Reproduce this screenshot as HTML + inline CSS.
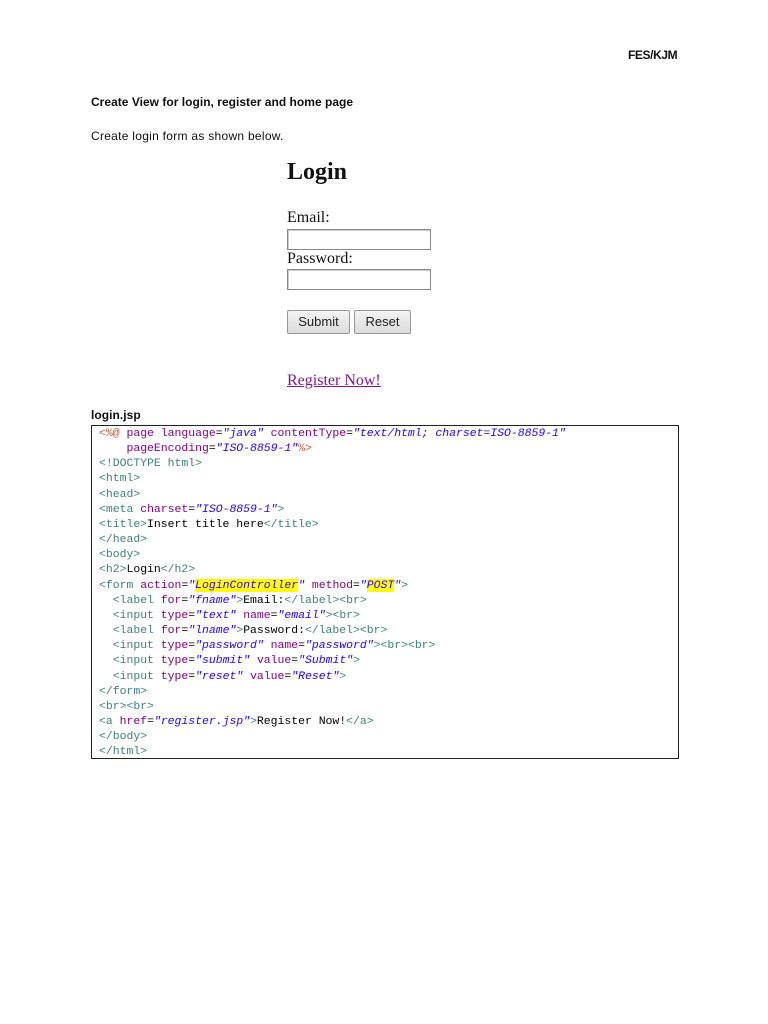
<!DOCTYPE html>
<html><head><meta charset="utf-8"><style>
body{margin:0;background:#fff;width:768px;height:1024px;position:relative;overflow:hidden}
.a{position:absolute;white-space:nowrap}
.cal{font-family:"Liberation Sans",sans-serif;font-weight:bold;font-size:12px;letter-spacing:0.05px;color:#111}
.ser{font-family:"Liberation Serif",serif;color:#111}
.inp{position:absolute;border:1px solid #888;background:#fff;box-shadow:inset 1px 1px 0 #ccc}
.btn{position:absolute;border:1px solid #999;background:linear-gradient(#f4f4f4,#dcdcdc);font-family:"Liberation Sans",sans-serif;font-size:13px;color:#222;text-align:center;line-height:22px;box-sizing:border-box;border-radius:2px}
.code{position:absolute;left:91px;top:425px;width:586px;height:332px;border:1px solid #222}
pre{margin:0;position:absolute;left:7px;top:0px;font-family:"Liberation Mono",monospace;font-size:11.45px;line-height:15.15px;color:#000}
.t{color:#3f7f7f}.n{color:#7f007f}.v{color:#2a00ff;font-style:italic}.d{color:#bf5f3f}.h{background:#ffff00}
</style></head><body>
<div class="a cal" style="left:628px;top:48px;letter-spacing:-0.4px">FES/KJM</div>
<div class="a cal" style="left:91px;top:95px;letter-spacing:0.02px">Create View for login, register and home page</div>
<div class="a cal" style="left:91px;top:129px;font-weight:normal;letter-spacing:0.28px">Create login form as shown below.</div>
<div class="a ser" style="left:287px;top:159px;font-size:24px;font-weight:bold">Login</div>
<div class="a ser" style="left:287px;top:209px;font-size:16px">Email:</div>
<div class="inp" style="left:287px;top:229px;width:142px;height:19px"></div>
<div class="a ser" style="left:287px;top:250px;font-size:16px">Password:</div>
<div class="inp" style="left:287px;top:269px;width:142px;height:19px"></div>
<div class="btn" style="left:287px;top:310px;width:63px;height:24px">Submit</div>
<div class="btn" style="left:354px;top:310px;width:57px;height:24px">Reset</div>
<div class="a ser" style="left:287px;top:372px;font-size:16px;color:#7a1a8a;text-decoration:underline">Register Now!</div>
<div class="a cal" style="left:91px;top:408px">login.jsp</div>
<div class="code"><pre><span class="d">&lt;%@</span> <span class="n">page language</span>=<span class="v">"java"</span> <span class="n">contentType</span>=<span class="v">"text/html; charset=ISO-8859-1"</span>
    <span class="n">pageEncoding</span>=<span class="v">"ISO-8859-1"</span><span class="d">%&gt;</span>
<span class="t">&lt;!DOCTYPE html&gt;</span>
<span class="t">&lt;html&gt;</span>
<span class="t">&lt;head&gt;</span>
<span class="t">&lt;meta</span> <span class="n">charset</span>=<span class="v">"ISO-8859-1"</span><span class="t">&gt;</span>
<span class="t">&lt;title&gt;</span>Insert title here<span class="t">&lt;/title&gt;</span>
<span class="t">&lt;/head&gt;</span>
<span class="t">&lt;body&gt;</span>
<span class="t">&lt;h2&gt;</span>Login<span class="t">&lt;/h2&gt;</span>
<span class="t">&lt;form</span> <span class="n">action</span>=<span class="v">"<span class="h">LoginController</span>"</span> <span class="n">method</span>=<span class="v">"<span class="h">POST</span>"</span><span class="t">&gt;</span>
  <span class="t">&lt;label</span> <span class="n">for</span>=<span class="v">"fname"</span><span class="t">&gt;</span>Email:<span class="t">&lt;/label&gt;&lt;br&gt;</span>
  <span class="t">&lt;input</span> <span class="n">type</span>=<span class="v">"text"</span> <span class="n">name</span>=<span class="v">"email"</span><span class="t">&gt;&lt;br&gt;</span>
  <span class="t">&lt;label</span> <span class="n">for</span>=<span class="v">"lname"</span><span class="t">&gt;</span>Password:<span class="t">&lt;/label&gt;&lt;br&gt;</span>
  <span class="t">&lt;input</span> <span class="n">type</span>=<span class="v">"password"</span> <span class="n">name</span>=<span class="v">"password"</span><span class="t">&gt;&lt;br&gt;&lt;br&gt;</span>
  <span class="t">&lt;input</span> <span class="n">type</span>=<span class="v">"submit"</span> <span class="n">value</span>=<span class="v">"Submit"</span><span class="t">&gt;</span>
  <span class="t">&lt;input</span> <span class="n">type</span>=<span class="v">"reset"</span> <span class="n">value</span>=<span class="v">"Reset"</span><span class="t">&gt;</span>
<span class="t">&lt;/form&gt;</span>
<span class="t">&lt;br&gt;&lt;br&gt;</span>
<span class="t">&lt;a</span> <span class="n">href</span>=<span class="v">"register.jsp"</span><span class="t">&gt;</span>Register Now!<span class="t">&lt;/a&gt;</span>
<span class="t">&lt;/body&gt;</span>
<span class="t">&lt;/html&gt;</span></pre></div>
</body></html>
